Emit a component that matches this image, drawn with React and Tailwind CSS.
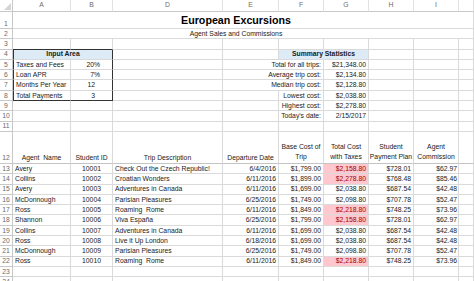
import React from "react";

const G = "border-r border-b border-[#dadada]";
const base = "flex items-end whitespace-pre leading-[9px] pb-[0.5px] overflow-visible";

function RowHead({ n }) {
  return (
    <div className={`flex items-end justify-center whitespace-pre leading-[9px] pb-[0.5px] text-[6.8px] text-[#6b6b6b] border-r border-b border-[#c8c8c8] ${n === 12 ? "" : ""}`}>
      {n}
    </div>
  );
}

function C({ cls = "", children }) {
  return <div className={`${base} ${cls}`}>{children}</div>;
}

const data = [
  ["Avery", "10001", "Check Out the Czech Republic!", "6/4/2016", "$1,799.00", "$2,158.80", "$728.01", "$62.97", true],
  ["Collins", "10002", "Croatian Wonders", "6/11/2016", "$1,899.00", "$2,278.80", "$768.48", "$85.46", true],
  ["Avery", "10003", "Adventures in Canada", "6/11/2016", "$1,699.00", "$2,038.80", "$687.54", "$42.48", false],
  ["McDonnough", "10004", "Parisian Pleasures", "6/25/2016", "$1,749.00", "$2,098.80", "$707.78", "$52.47", false],
  ["Ross", "10005", "Roaming  Rome", "6/11/2016", "$1,849.00", "$2,218.80", "$748.25", "$73.96", true],
  ["Shannon", "10006", "Viva España", "6/25/2016", "$1,799.00", "$2,158.80", "$728.01", "$62.97", true],
  ["Collins", "10007", "Adventures in Canada", "6/11/2016", "$1,699.00", "$2,038.80", "$687.54", "$42.48", false],
  ["Ross", "10008", "Live it Up London", "6/18/2016", "$1,699.00", "$2,038.80", "$687.54", "$42.48", false],
  ["McDonnough", "10009", "Parisian Pleasures", "6/25/2016", "$1,749.00", "$2,098.80", "$707.78", "$52.47", false],
  ["Ross", "10010", "Roaming  Rome", "6/11/2016", "$1,849.00", "$2,218.80", "$748.25", "$73.96", true],
];

const inputs = [
  ["Taxes and Fees", "20%", "pr-[12px]"],
  ["Loan APR", "7%", "pr-[12px]"],
  ["Months Per Year", "12", "pr-[17px]"],
  ["Total Payments", "3", "pr-[17px]"],
];

const summary = [
  ["Total for all trips:", "$21,348.00", true],
  ["Average trip cost:", "$2,134.80", true],
  ["Median trip cost:", "$2,128.80", true],
  ["Lowest cost:", "$2,038.80", false],
  ["Highest cost:", "$2,278.80", false],
  ["Today's date:", "2/15/2017", false],
];

function EmptyRow({ n }) {
  return (
    <>
      <RowHead n={n} />
      <C cls={G} />
      <C cls={G} />
      <C cls={G} />
      <C cls={G} />
      <C cls={G} />
      <C cls={G} />
      <C cls={G} />
      <C cls={G} />
      <C cls={G} />
    </>
  );
}

export default function App() {
  const cols = ["A", "B", "D", "E", "F", "G", "H", "I", ""];
  return (
    <div className="w-[474px] h-[281px] overflow-hidden bg-white text-[#1a1a1a] text-[6.8px] font-['Liberation_Sans',Arial,sans-serif]">
      <div className="grid grid-cols-[13px_58px_42px_110px_56px_45px_45px_45px_45px_1fr] grid-rows-[12px_17px_repeat(10,10.3px)_32px_repeat(12,10.3px)]">
        {/* header row */}
        <div className="relative border-r border-b border-[#c8c8c8]">
          <svg className="absolute right-[1px] bottom-[1px]" width="7" height="7" viewBox="0 0 7 7">
            <polygon points="7,0 7,7 0,7" fill="#d4d4d4" />
          </svg>
        </div>
        {cols.map((c, i) => (
          <div
            key={i}
            className="flex items-center justify-center text-[6.8px] text-[#6b6b6b] border-b border-[#c8c8c8] border-r border-r-[#e2e2e2]"
          >
            {c}
          </div>
        ))}

        {/* row 1 */}
        <RowHead n={1} />
        <C cls={`col-span-8 justify-center border-b border-[#dadada] pb-[1px]`}>
          <span className="font-bold text-[10.7px] leading-[13px] text-black">European Excursions</span>
        </C>
        <C cls={G} />

        {/* row 2 */}
        <RowHead n={2} />
        <C cls="col-span-8 justify-center border-b border-[#dadada]">Agent Sales and Commissions</C>
        <C cls={G} />

        {/* row 3 */}
        <RowHead n={3} />
        <C cls="border-r border-[#dadada] border-b border-b-[#333]" />
        <C cls="border-r border-[#dadada] border-b border-b-[#333]" />
        <C cls={G} />
        <C cls={G} />
        <C cls={G} />
        <C cls={G} />
        <C cls={G} />
        <C cls={G} />
        <C cls={G} />

        {/* row 4 */}
        <RowHead n={4} />
        <C cls="col-span-2 justify-center bg-[#ddebf7] font-bold border-l border-l-[#333] border-r border-r-[#333] border-b border-b-[#dadada]">
          Input Area
        </C>
        <C cls={G} />
        <C cls={G} />
        <C cls="col-span-2 justify-center bg-[#ddebf7] font-bold border-r border-b border-[#dadada]">
          Summary Statistics
        </C>
        <C cls={G} />
        <C cls={G} />
        <C cls={G} />

        {/* rows 5-10 */}
        {[0, 1, 2, 3, 4, 5].map((i) => {
          const n = 5 + i;
          const inp = inputs[i];
          const s = summary[i];
          const last = i === 3;
          return (
            <React.Fragment key={n}>
              <RowHead n={n} />
              {inp ? (
                <>
                  <C
                    cls={`pl-[2px] border-l border-l-[#333] border-r border-r-[#dadada] border-b ${
                      last ? "border-b-[#333]" : "border-b-[#dadada]"
                    }`}
                  >
                    {inp[0]}
                  </C>
                  <C
                    cls={`justify-end ${inp[2]} border-r border-r-[#333] border-b ${
                      last ? "border-b-[#333]" : "border-b-[#dadada]"
                    }`}
                  >
                    {inp[1]}
                  </C>
                </>
              ) : (
                <>
                  <C cls={G} />
                  <C cls={G} />
                </>
              )}
              <C cls={G} />
              <C cls={s[2] ? "border-b border-[#dadada]" : G} />
              <C cls={`${G} justify-end pr-[2px]`}>{s[0]}</C>
              <C cls={`${G} justify-end pr-[2px]`}>{s[1]}</C>
              <C cls={G} />
              <C cls={G} />
              <C cls={G} />
            </React.Fragment>
          );
        })}

        <EmptyRow n={11} />

        {/* row 12 headers */}
        <RowHead n={12} />
        <C cls={`${G} justify-center border-b-[#c4c4c4]`}>Agent  Name</C>
        <C cls={`${G} justify-center border-b-[#c4c4c4]`}>Student ID</C>
        <C cls={`${G} justify-center border-b-[#c4c4c4]`}>Trip Description</C>
        <C cls={`${G} justify-center border-b-[#c4c4c4]`}>Departure Date</C>
        <C cls={`${G} justify-center text-center leading-[10px] border-b-[#c4c4c4]`}>
          {"Base Cost of\nTrip"}
        </C>
        <C cls={`${G} justify-center text-center leading-[10px] border-b-[#c4c4c4]`}>
          {"Total Cost\nwith Taxes"}
        </C>
        <C cls={`${G} justify-center text-center leading-[10px] border-b-[#c4c4c4]`}>
          {"Student\nPayment Plan"}
        </C>
        <C cls={`${G} justify-center text-center leading-[10px] border-b-[#c4c4c4]`}>
          {"Agent\nCommission"}
        </C>
        <C cls={`${G} border-b-[#c4c4c4]`} />

        {data.map((r, i) => (
          <React.Fragment key={i}>
            <RowHead n={13 + i} />
            <C cls={`${G} pl-[2px]`}>{r[0]}</C>
            <C cls={`${G} justify-center`}>{r[1]}</C>
            <C cls={`${G} pl-[2px]`}>{r[2]}</C>
            <C cls={`${G} justify-end pr-[2px]`}>{r[3]}</C>
            <C cls={`${G} justify-end pr-[2px]`}>{r[4]}</C>
            <C cls={`${G} justify-end pr-[2px] ${r[8] ? "bg-[#ffc7ce] text-[#9c0006]" : ""}`}>{r[5]}</C>
            <C cls={`${G} justify-end pr-[2px]`}>{r[6]}</C>
            <C cls={`${G} justify-end pr-[1px]`}>{r[7]}</C>
            <C cls={G} />
          </React.Fragment>
        ))}

        <EmptyRow n={23} />
        <EmptyRow n={24} />
      </div>
    </div>
  );
}
